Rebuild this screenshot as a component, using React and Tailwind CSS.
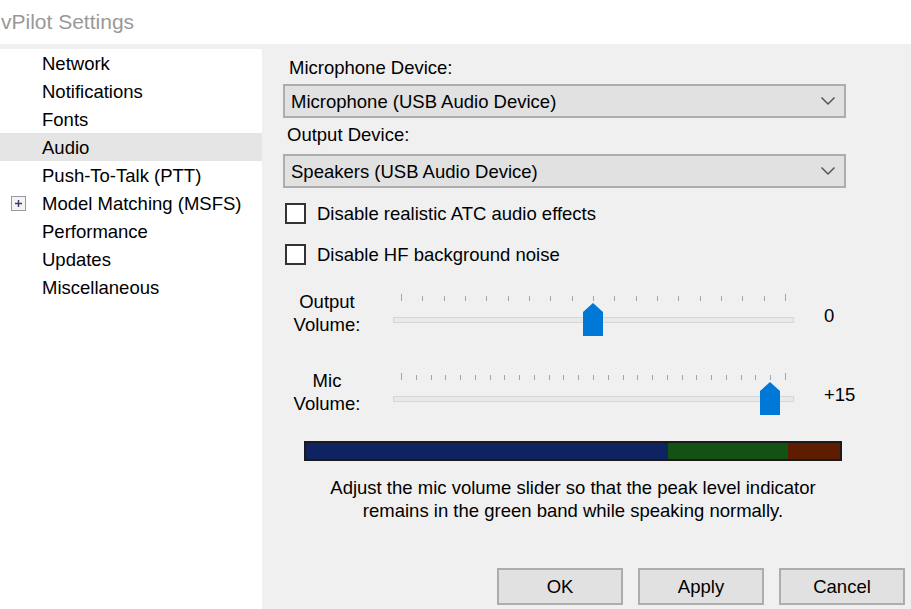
import React from "react"

const treeItems = [
  { name: "Network" },
  { name: "Notifications" },
  { name: "Fonts" },
  { name: "Audio", selected: true },
  { name: "Push-To-Talk (PTT)" },
  { name: "Model Matching (MSFS)", expandable: true },
  { name: "Performance" },
  { name: "Updates" },
  { name: "Miscellaneous" },
]

function PlusBox() {
  return (
    <svg width="15" height="15" viewBox="0 0 15 15" className="shrink-0">
      <rect x="0.5" y="0.5" width="14" height="14" fill="#f4f4f4" stroke="#9a9a9a" />
      <path d="M4 7.5h7M7.5 4v7" stroke="#3b3b6b" strokeWidth="1.4" />
    </svg>
  )
}

function Chevron() {
  return (
    <svg width="16" height="10" viewBox="0 0 16 10">
      <path d="M1.5 1.5l6.5 6.5 6.5-6.5" fill="none" stroke="#555" strokeWidth="1.5" />
    </svg>
  )
}

function Combo({ value }) {
  return (
    <div className="w-[563px] h-[34px] bg-[#e1e1e1] border-2 border-[#adadad] flex items-center justify-between pl-[6px] pr-[8px]">
      <span className="pt-[1px]">{value}</span>
      <Chevron />
    </div>
  )
}

function Checkbox({ label }) {
  return (
    <div className="flex items-center h-[21px] ml-[2px]">
      <div className="w-[21px] h-[21px] border-2 border-[#333] bg-white shrink-0" />
      <span className="ml-[11px]">{label}</span>
    </div>
  )
}

function Slider({ ticks, pos }) {
  const tickList = Array.from({ length: ticks })
  const span = 384
  return (
    <div className="relative w-[401px] h-[50px]">
      {tickList.map((_, i) => {
        const edge = i === ticks - 1 || i === 0
        return (
          <div
            key={i}
            className={`absolute w-px bg-[#a5a5a5] ${edge ? "top-[6px] h-[7px]" : "top-[8px] h-[5px]"}`}
            style={{ left: 8 + (span * i) / (ticks - 1) }}
          />
        )
      })}
      <div className="absolute left-0 right-0 top-[29px] h-[6px] bg-[#e7eaea] border border-[#d6d6d6]" />
      <svg
        width="20"
        height="33"
        viewBox="0 0 20 33"
        className="absolute top-[15px]"
        style={{ left: 8 + span * pos - 10 }}
      >
        <polygon points="10,0 20,9 20,33 0,33 0,9" fill="#0078d7" />
      </svg>
    </div>
  )
}

function SliderRow({ top, bottom, ticks, pos, value }) {
  return (
    <div className="flex h-[50px]">
      <div className="w-[88px] text-center leading-[23px] pt-[2px]">
        <div>{top}</div>
        <div>{bottom}</div>
      </div>
      <div className="ml-[22px]">
        <Slider ticks={ticks} pos={pos} />
      </div>
      <div className="ml-[30px] pt-[16px] leading-[23px]">{value}</div>
    </div>
  )
}

function Button({ children }) {
  return (
    <div className="w-[126px] h-[37px] bg-[#e1e1e1] border-2 border-[#adadad] flex items-center justify-center pt-[1px]">
      {children}
    </div>
  )
}

export default function App() {
  return (
    <div
      className="w-[911px] h-[609px] overflow-hidden bg-[#f0f0f0] text-[18.5px] text-black flex flex-col"
      style={{ fontFamily: '"Liberation Sans", Arial, sans-serif' }}
    >
      {/* Title bar */}
      <div className="h-[44px] bg-white flex items-center shrink-0">
        <span className="text-[21px] text-[#999] ml-[1px]">vPilot Settings</span>
      </div>

      <div className="flex flex-1 min-h-0">
        {/* Tree */}
        <div className="w-[262px] mt-[5px] bg-white shrink-0">
          {treeItems.map((item) => (
            <div
              key={item.name}
              className={`h-[28px] flex items-center pt-[1px] ${item.selected ? "bg-[#e5e5e5]" : ""}`}
            >
              <div className="w-[42px] flex justify-center pl-[1px] pr-[6px]">
                {item.expandable && <PlusBox />}
              </div>
              <span>{item.name}</span>
            </div>
          ))}
        </div>

        {/* Audio settings */}
        <div className="flex-1 flex flex-col pl-[21px]">
          <div className="mt-[12px] ml-[6px] leading-[24px]">Microphone Device:</div>
          <div className="mt-[4px]">
            <Combo value="Microphone (USB Audio Device)" />
          </div>
          <div className="mt-[5px] ml-[4px] leading-[24px]">Output Device:</div>
          <div className="mt-[7px]">
            <Combo value="Speakers (USB Audio Device)" />
          </div>
          <div className="mt-[15px]">
            <Checkbox label="Disable realistic ATC audio effects" />
          </div>
          <div className="mt-[20px]">
            <Checkbox label="Disable HF background noise" />
          </div>

          <div className="mt-[23px]">
            <SliderRow top="Output" bottom="Volume:" ticks={19} pos={0.5} value="0" />
          </div>
          <div className="mt-[29px]">
            <SliderRow top="Mic" bottom="Volume:" ticks={27} pos={25 / 26} value="+15" />
          </div>

          <div className="mt-[24px] ml-[21px] w-[538px] h-[20px] border-2 border-[#1a1a1a] flex">
            <div className="w-[362px] bg-[#0f2360]" />
            <div className="w-[120px] bg-[#145214]" />
            <div className="flex-1 bg-[#5e1c00]" />
          </div>

          <div className="mt-[15px] ml-[21px] w-[538px] text-center leading-[23px]">
            <div>Adjust the mic volume slider so that the peak level indicator</div>
            <div>remains in the green band while speaking normally.</div>
          </div>

          <div className="mt-auto mb-[4px] flex justify-end gap-[15px] pr-[6px]">
            <Button>OK</Button>
            <Button>Apply</Button>
            <Button>Cancel</Button>
          </div>
        </div>
      </div>
    </div>
  )
}
